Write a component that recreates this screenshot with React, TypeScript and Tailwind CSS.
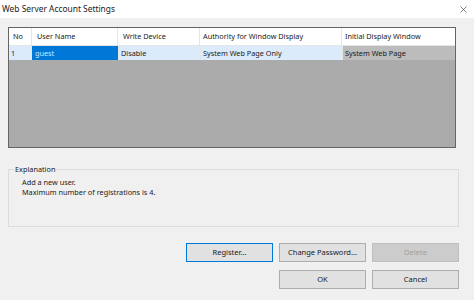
import { X } from "lucide-react";

const font = { fontFamily: '"Noto Sans", "DejaVu Sans", sans-serif' };

function Btn({ label, focused, disabled }: { label: string; focused?: boolean; disabled?: boolean }) {
  return (
    <div
      className={
        "flex h-[19px] w-[87px] items-center justify-center border text-[7.5px] " +
        (disabled
          ? "border-[#bfbfbf] bg-[#cccccc] text-[#a0a0a0]"
          : focused
          ? "border-[#0078d7] bg-[#e1e1e1] text-[#1a1a1a]"
          : "border-[#adadad] bg-[#e1e1e1] text-[#1a1a1a]")
      }
    >
      {label}
    </div>
  );
}

export default function App() {
  return (
    <div className="flex h-[300px] w-[474px] flex-col bg-[#f0f0f0] text-[#1a1a1a]" style={font}>
      {/* title bar */}
      <div className="flex h-[18px] items-center justify-between bg-white pl-[2px] pr-[5px]">
        <span className="text-[8.4px]">Web Server Account Settings</span>
        <X className="h-[11px] w-[11px] text-[#333]" strokeWidth={1.3} />
      </div>

      {/* table */}
      <div className="ml-[8px] mt-[9px] flex h-[121px] w-[448px] flex-col border border-[#646464] bg-[#ababab] text-[7.3px]">
        <div className="flex h-[17px] bg-white">
          <div className="flex w-[23px] items-center border-r border-[#e5e5e5] pl-[4px]">No</div>
          <div className="flex w-[86px] items-center border-r border-[#e5e5e5] pl-[5px]">User Name</div>
          <div className="flex w-[82px] items-center border-r border-[#e5e5e5] pl-[5px]">Write Device</div>
          <div className="flex w-[142px] items-center border-r border-[#e5e5e5] pl-[3px]">Authority for Window Display</div>
          <div className="flex flex-1 items-center pl-[3px]">Initial Display Window</div>
        </div>
        <div className="flex h-[15px] border-t border-[#e5e5e5]">
          <div className="flex w-[23px] items-center bg-[#dcebfc] pl-[2px]">1</div>
          <div className="flex w-[86px] items-center bg-[#0078d7] pl-[3px] text-[#cfe6ff]">guest</div>
          <div className="flex w-[82px] items-center border-l border-[#e5e5e5] bg-[#dcebfc] pl-[2px]">Disable</div>
          <div className="flex w-[142px] items-center border-l border-[#e5e5e5] bg-[#dcebfc] pl-[2px]">System Web Page Only</div>
          <div className="flex flex-1 items-center border-l border-[#e5e5e5] bg-[#bcbcbc] pl-[2px]">System Web Page</div>
        </div>
      </div>

      {/* explanation group */}
      <div className="relative ml-[8px] mt-[21px] h-[58px] w-[451px] border border-[#dcdcdc]">
        <span className="absolute left-[5px] top-[-6px] bg-[#f0f0f0] px-[1px] text-[7.3px] leading-[10px]">Explanation</span>
        <div className="pl-[13px] pt-[7px] text-[7.3px] leading-[10px]">
          <div>Add a new user.</div>
          <div>Maximum number of registrations is 4.</div>
        </div>
      </div>

      {/* buttons */}
      <div className="ml-[186px] mt-[16px] flex flex-col gap-[8px]">
        <div className="flex gap-[6px]">
          <Btn label="Register..." focused />
          <Btn label="Change Password..." />
          <Btn label="Delete" disabled />
        </div>
        <div className="ml-[93px] flex gap-[6px]">
          <Btn label="OK" />
          <Btn label="Cancel" />
        </div>
      </div>
    </div>
  );
}
